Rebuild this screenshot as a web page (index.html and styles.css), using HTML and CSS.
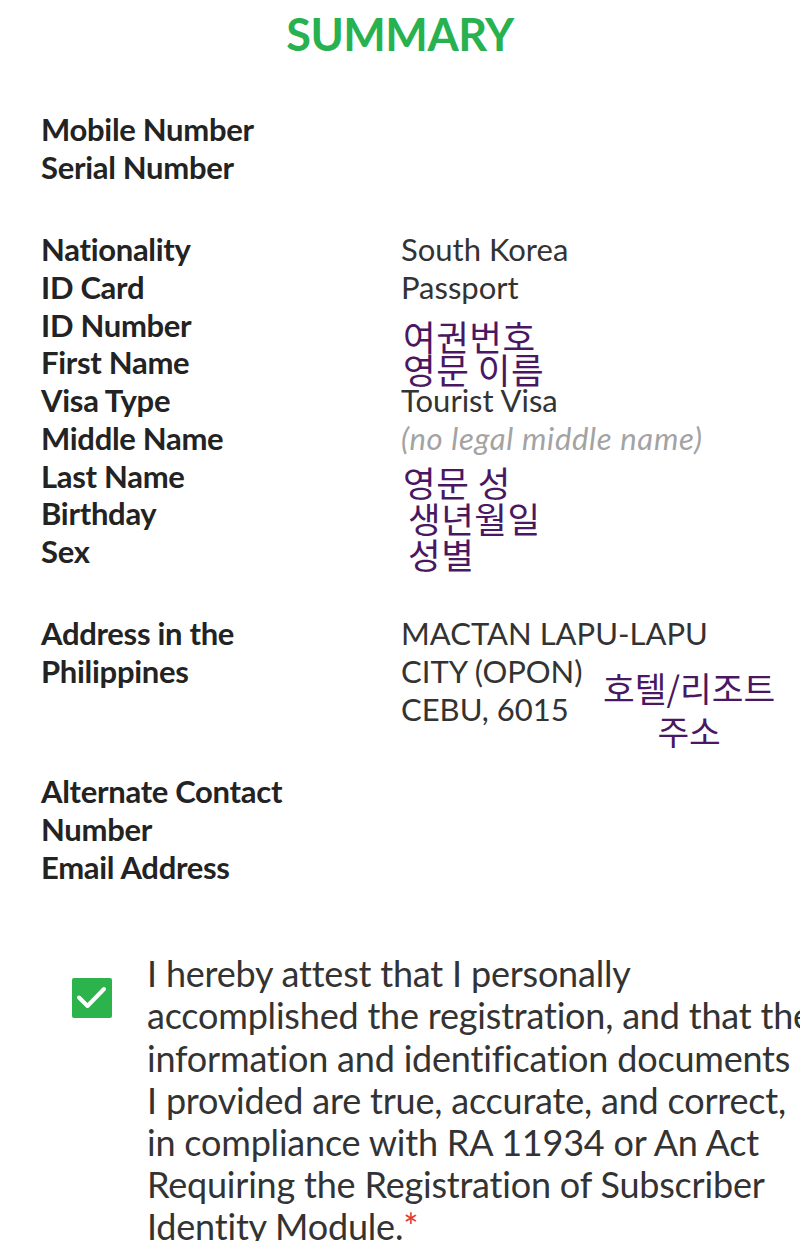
FILE: index.html
```html
<!DOCTYPE html>
<html lang="en">
<head>
<meta charset="utf-8">
<title>Summary</title>
<link rel="stylesheet" href="styles.css">
</head>
<body>
<main class="page">
  <h1 class="title">SUMMARY</h1>

  <section class="group">
    <div class="label">Mobile Number</div><div class="value"></div>
    <div class="label">Serial Number</div><div class="value"></div>
  </section>

  <section class="group">
    <div class="label">Nationality</div><div class="value">South Korea</div>
    <div class="label">ID Card</div><div class="value">Passport</div>
    <div class="label">ID Number</div><div class="value ko ko-a">여권번호</div>
    <div class="label">First Name</div><div class="value ko ko-b">영문 이름</div>
    <div class="label">Visa Type</div><div class="value">Tourist Visa</div>
    <div class="label">Middle Name</div><div class="value muted">(no legal middle name)</div>
    <div class="label">Last Name</div><div class="value ko ko-c">영문 성</div>
    <div class="label">Birthday</div><div class="value ko ko-d">생년월일</div>
    <div class="label">Sex</div><div class="value ko ko-e">성별</div>
  </section>

  <section class="group">
    <div class="label">Address in the<br>Philippines</div>
    <div class="value address">
      <div class="addr-text">MACTAN LAPU-LAPU<br>CITY (OPON)<br>CEBU, 6015</div>
      <div class="addr-note">호텔/리조트<br>주소</div>
    </div>
  </section>

  <section class="group">
    <div class="label">Alternate Contact<br>Number<br>Email Address</div><div class="value"></div>
  </section>

  <section class="attest">
    <span class="checkbox" aria-hidden="true">
      <svg viewBox="0 0 40 40" width="40" height="40"><path d="M7 19.5 L15.5 28 L32 11" fill="none" stroke="#ffffff" stroke-width="4" stroke-linecap="round" stroke-linejoin="round"/></svg>
    </span>
    <p class="attest-text">I hereby attest that I personally<br>accomplished the registration, and that the<br>information and identification documents<br>I provided are true, accurate, and correct,<br>in compliance with RA 11934 or An Act<br>Requiring the Registration of Subscriber<br>Identity Module.<span class="req">*</span></p>
  </section>
</main>
</body>
</html>
```

FILE: styles.css
```css
html, body {
  margin: 0;
  padding: 0;
  background: #ffffff;
  overflow-x: hidden;
}

.page {
  font-family: Lato, "Noto Sans", sans-serif;
  color: #2a2a2a;
  padding: 10px 0 0 41px;
  width: 900px;
  overflow: hidden;
}

.title {
  margin: 0 0 53px -41px;
  width: 800px;
  text-align: center;
  font-size: 45px;
  line-height: 48px;
  font-weight: 700;
  color: #27b14f;
  letter-spacing: -0.5px;
}

.group {
  display: grid;
  grid-template-columns: 360px 1fr;
  margin-bottom: 44.5px;
  font-size: 31px;
  line-height: 37.75px;
}

.label {
  font-weight: 700;
  color: #232323;
  letter-spacing: -0.3px;
}

.value {
  font-weight: 400;
  color: #333333;
}

.muted {
  font-style: italic;
  color: #a3a3a3;
  letter-spacing: 0.7px;
}

.ko {
  font-family: "Noto Sans CJK KR", sans-serif;
  font-size: 35.5px;
  color: #4a1862;
  letter-spacing: 0.5px;
}

.ko-a { transform: translate(2px, 10px); }
.ko-b { transform: translate(2px, 6px); }
.ko-c { transform: translate(2px, 5px); }
.ko-d { transform: translate(7px, 4px); }
.ko-e { transform: translate(7px, 2px); }

.address {
  position: relative;
}

.addr-note {
  position: absolute;
  left: 202px;
  top: 51px;
  font-family: "Noto Sans CJK KR", sans-serif;
  font-size: 34.5px;
  line-height: 43px;
  color: #4a1862;
  text-align: center;
  white-space: nowrap;
}

.attest {
  display: flex;
  align-items: flex-start;
  gap: 35px;
  padding-left: 31px;
  margin-top: 66px;
}

.checkbox {
  flex: 0 0 40px;
  width: 40px;
  height: 40px;
  margin-top: 26px;
  background: #2db34b;
  border-radius: 2px;
}

.checkbox svg {
  display: block;
}

.attest-text {
  margin: 0;
  white-space: nowrap;
  font-size: 36px;
  line-height: 42.2px;
  color: #333333;
  letter-spacing: -0.2px;
}

.req {
  color: #e53935;
}
```
